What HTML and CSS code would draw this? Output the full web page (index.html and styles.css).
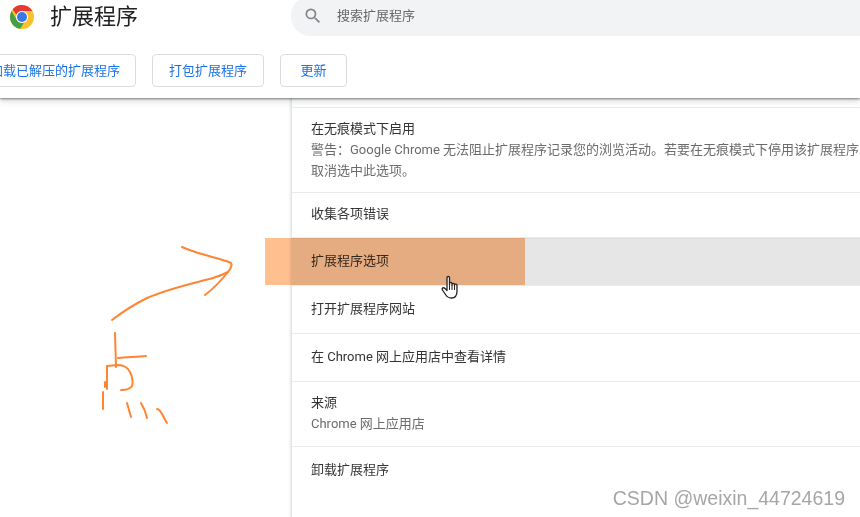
FILE: index.html
```html
<!DOCTYPE html>
<html lang="zh-CN">
<head>
    <meta charset="UTF-8">
    <meta name="viewport" content="width=device-width, initial-scale=1.0">
    <title>扩展程序</title>
    <link rel="stylesheet" href="styles.css">
</head>
<body>
    <header class="header">
        <div class="topbar">
            <div class="brand">
                <svg class="logo" viewBox="0 0 24 24" width="24" height="24">
                    <circle cx="12" cy="12" r="12" fill="#fbc02d"/>
                    <path d="M12 0a12 12 0 0 1 10.39 6H12a6 6 0 0 0-5.6 3.85L2.6 4.3A12 12 0 0 1 12 0z" fill="#e53935"/>
                    <path d="M1.6 6a12 12 0 0 0 8.6 17.87l3.7-6.2a6 6 0 0 1-7.1-2.6L1.6 6z" fill="#43a047"/>
                    <circle cx="12" cy="12" r="6" fill="#fff"/>
                    <circle cx="12" cy="12" r="5" fill="#3b78e7"/>
                </svg>
                <h1 class="title">扩展程序</h1>
            </div>
            <div class="search">
                <svg class="search-icon" viewBox="0 0 24 24" width="20" height="20">
                    <path d="M15.5 14h-.79l-.28-.27A6.47 6.47 0 0 0 16 9.5 6.5 6.5 0 1 0 9.5 16c1.61 0 3.09-.59 4.23-1.57l.27.28v.79l5 4.99L20.49 19l-4.99-5zm-6 0C7.01 14 5 11.99 5 9.5S7.01 5 9.5 5 14 7.01 14 9.5 11.99 14 9.5 14z" fill="#80868b"/>
                </svg>
                <span class="search-text">搜索扩展程序</span>
            </div>
        </div>
        <div class="toolbar">
            <button class="btn btn-load">加载已解压的扩展程序</button>
            <button class="btn btn-pack">打包扩展程序</button>
            <button class="btn btn-update">更新</button>
        </div>
    </header>

    <main class="main">
        <div class="side"></div>
        <section class="panel">
            <div class="row row-incognito">
                <div class="label">在无痕模式下启用</div>
                <div class="sub">警告&#xFF1A;Google Chrome 无法阻止扩展程序记录您的浏览活动。若要在无痕模式下停用该扩展程序&#xFF0C;请取消选中此选项。</div>
            </div>
            <div class="row row-simple row-errors"><div class="label">收集各项错误</div></div>
            <div class="row row-simple row-hover"><div class="label">扩展程序选项</div></div>
            <div class="row row-simple"><div class="label">打开扩展程序网站</div></div>
            <div class="row row-simple"><div class="label">在 Chrome 网上应用店中查看详情</div></div>
            <div class="row row-source">
                <div class="label">来源</div>
                <div class="sub">Chrome 网上应用店</div>
            </div>
            <div class="row row-simple row-last"><div class="label">卸载扩展程序</div></div>
        </section>
    </main>

    <!-- annotations drawn on top of the screenshot -->
    <div class="highlight"></div>
    <svg class="scribble" viewBox="0 0 860 517" width="860" height="517">
        <g fill="none" stroke="#ff8533" stroke-width="2" stroke-linecap="round" stroke-linejoin="round">
            <path d="M112 320C125 310 135 304 147 298C170 288 195 283 213 278C220 276 224 274 228 272"/>
            <path d="M182 247C197 254 215 257 229 262C233 263 232 267 228 272C220 282 213 289 205 295"/>
            <path d="M115 333L116 367"/>
            <path d="M118 358C127 357 136 357 146 356"/>
            <path d="M107 389L107 366L118 365C125 365 128 368 130 372C133 378 133 384 132 386C130 389 126 390 121 390"/>
            <path d="M105 382L105 387"/>
            <path d="M103 392L103 409"/>
            <path d="M127 403L131 417"/>
            <path d="M141 403C144 408 146 413 147 418"/>
            <path d="M157 409C161 409 163 417 167 423"/>
        </g>
    </svg>
    <svg class="cursor" viewBox="0 0 20 26" width="20" height="26">
        <path d="M6 2.500C6 1 8.500 1 8.500 2.500L8.500 10L8.500 8.500C8.500 7 11 7 11 8.500L11 10.500L11 9.500C11 8 13.500 8 13.500 9.500L13.500 11L13.500 10C13.500 8.800 16 8.800 16 10.200L16 16C16 20 14 23 10.500 23C7.500 23 6 22 4.500 19.500L1.500 15C0.500 13 2.500 12 4 13.500L6 15.500Z" fill="#fff" stroke="#222" stroke-width="1.300" stroke-linejoin="round"/>
        <path d="M8.500 10V15M11 10.500V15M13.500 11V15" fill="none" stroke="#222" stroke-width="1"/>
    </svg>
    <div class="watermark">CSDN @weixin_44724619</div>
</body>
</html>
```

FILE: styles.css
```css
html, body {
    height: 100%;
}
body {
    margin: 0;
    width: 860px;
    height: 517px;
    overflow: hidden;
    background: #fff;
    color: #333;
    font-family: Roboto, "Noto Sans CJK SC", sans-serif;
    font-size: 13px;
    position: relative;
}
.header {
    height: 98px;
    background: #fff;
    box-shadow: 0 1px 2px rgba(60, 64, 67, 0.6), 0 2px 7px rgba(60, 64, 67, 0.25);
    position: relative;
    z-index: 1;
}
.topbar {
    display: flex;
    height: 36px;
}
.brand {
    width: 291px;
    display: flex;
    align-items: center;
    padding-left: 10px;
    box-sizing: border-box;
    flex-shrink: 0;
}
.logo {
    flex-shrink: 0;
    margin-top: -3px;
}
.title {
    margin: -3px 0 0 16px;
    font-size: 22px;
    font-weight: 400;
    line-height: 32px;
    color: #202124;
}
.search {
    flex: 1;
    height: 40px;
    margin-top: -4px;
    padding-left: 12px;
    box-sizing: border-box;
    display: flex;
    align-items: center;
    background: #f1f3f4;
    border-radius: 20px 0 0 20px;
}
.search-text {
    margin: -3px 0 0 14px;
    color: #666;
}
.toolbar {
    display: flex;
    gap: 16px;
    margin: 18px 0 0 -27px;
}
.btn {
    height: 33px;
    padding: 0 0 3px;
    background: #fff;
    border: 1px solid #dadce0;
    border-radius: 4px;
    color: #1a73e8;
    font-family: inherit;
    font-size: 13px;
    box-sizing: border-box;
}
.btn-load {
    width: 163px;
    padding-left: 16px;
    text-align: left;
}
.btn-pack {
    width: 112px;
}
.btn-update {
    width: 67px;
}
.main {
    display: flex;
    height: 419px;
}
.side {
    width: 291px;
    flex-shrink: 0;
}
.panel {
    flex: 1;
    min-width: 0;
    padding-top: 9px;
    background: #fff;
    border-left: 1px solid #e4e4e4;
    box-shadow: -1px 0 2px rgba(60, 64, 67, 0.12);
}
.row {
    padding-left: 19px;
    border-bottom: 1px solid #ebebeb;
    box-sizing: border-box;
    white-space: nowrap;
}
.row-incognito {
    height: 86px;
    padding-top: 11px;
    border-top: 1px solid #ebebeb;
}
.row-incognito .sub {
    white-space: normal;
    width: 578px;
}
.row-simple {
    height: 48px;
    display: flex;
    align-items: center;
    padding-bottom: 2px;
}
.row-errors {
    height: 45px;
}
.row-hover {
    background: #e6e6e6;
    border-top: 1px solid #dcdcdc;
    height: 48px;
}
.row-source {
    height: 65px;
    padding-top: 11px;
}
.row-last {
    border-bottom: 0;
}
.label {
    line-height: 20px;
}
.sub {
    color: #6b6b6b;
    line-height: 21px;
}
.highlight {
    position: absolute;
    left: 265px;
    top: 238px;
    width: 260px;
    height: 47px;
    background: #ffbf8f;
    mix-blend-mode: multiply;
    z-index: 2;
}
.scribble {
    position: absolute;
    left: 0;
    top: 0;
    z-index: 3;
    pointer-events: none;
}
.cursor {
    position: absolute;
    left: 441px;
    top: 275px;
    z-index: 4;
}
.watermark {
    position: absolute;
    right: 15px;
    top: 487px;
    color: #a6a6a6;
    font-family: "Liberation Sans", sans-serif;
    font-size: 19.5px;
    line-height: 22px;
    z-index: 5;
}
```
